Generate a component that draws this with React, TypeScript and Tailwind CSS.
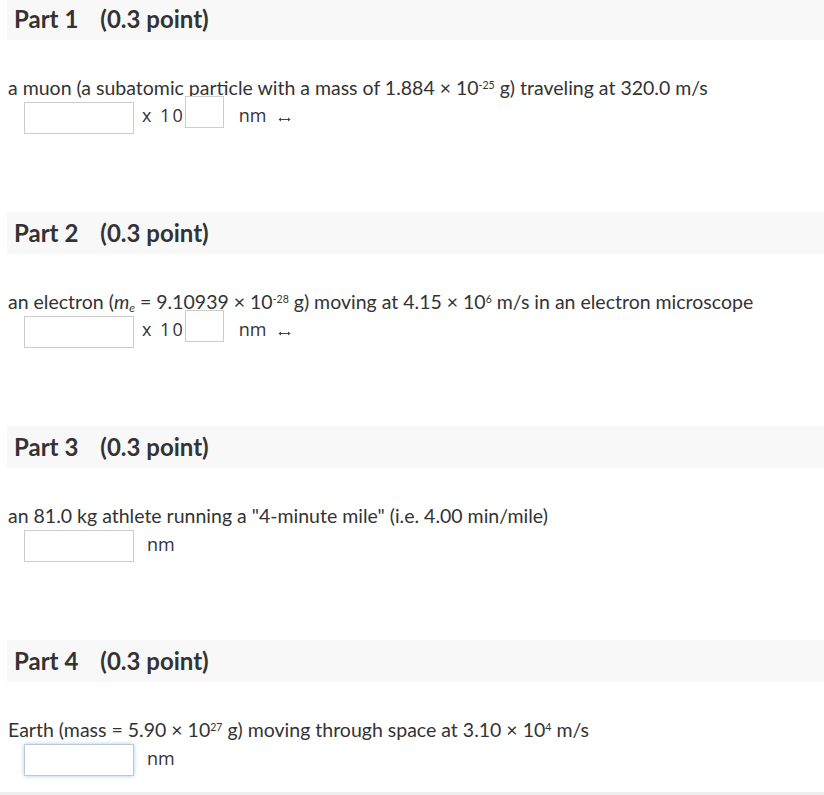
import type { ReactNode } from "react";

const sans = { fontFamily: "Lato, 'Open Sans', sans-serif" };

function Sup({ children }: { children: ReactNode }) {
  return <sup className="text-[10.5px] -top-[6px]">{children}</sup>;
}

function Box({ wide = true, focus = false }: { wide?: boolean; focus?: boolean }) {
  return (
    <div
      className={
        (wide ? "w-[110px] mt-[6px] " : "w-[39px] ") +
        "h-[32px] bg-white border " +
        (focus ? "border-[#bcc8d6] shadow-[0_0_4px_#a8cbee]" : "border-[#cccccc]")
      }
    />
  );
}

function Arrows() {
  return (
    <svg width="13" height="7" viewBox="0 0 13 7" className="ml-[12px] mt-[20px]">
      <path d="M1 3.5h11" stroke="#444" strokeWidth="1" />
      <path d="M0.5 3.5 3 1.5v4z M12.5 3.5 10 1.5v4z" fill="#444" />
    </svg>
  );
}

function Answer({ exp, focus }: { exp?: boolean; focus?: boolean }) {
  return (
    <div className="-mt-[2px] flex items-start pl-[24px] text-[18px] text-[#333] font-['Open_Sans',sans-serif]">
      <Box focus={focus} />
      {exp ? (
        <>
          <span className="ml-[8px] mt-[7px] leading-[24px] tracking-[2px]">x 10</span>
          <Box wide={false} />
          <span className="ml-[15px] mt-[7px] leading-[24px]">nm</span>
          <Arrows />
        </>
      ) : (
        <span className="ml-[13px] mt-[8px] leading-[24px]">nm</span>
      )}
    </div>
  );
}

function Part({ n, children }: { n: number; children: ReactNode }) {
  return (
    <section className="h-[214px]">
      <div className="ml-[7px] h-[42px] bg-[#f8f8f8] flex items-center pl-[7px] text-[24px] font-bold text-[#333]">
        <span>Part {n}</span>
        <span className="ml-[22px]">(0.3 point)</span>
      </div>
      <div className="pt-[38px]">{children}</div>
    </section>
  );
}

const q = "pl-[8px] text-[19.5px] leading-[20px] text-[#333]";

export default function App() {
  return (
    <div className="w-[824px] h-[795px] bg-white overflow-hidden relative" style={sans}>
      <div className="-mt-[2px]">
        <Part n={1}>
          <p className={q}>
            a muon (a subatomic particle with a mass of 1.884 × 10<Sup>-25</Sup> g) traveling at 320.0 m/s
          </p>
          <Answer exp />
        </Part>
        <Part n={2}>
          <p className={q}>
            an electron (<i>m</i>
            <sub className="text-[12px] italic">e</sub> = 9.10939 × 10<Sup>-28</Sup> g) moving at 4.15 × 10
            <Sup>6</Sup> m/s in an electron microscope
          </p>
          <Answer exp />
        </Part>
        <Part n={3}>
          <p className={q}>an 81.0 kg athlete running a "4-minute mile" (i.e. 4.00 min/mile)</p>
          <Answer />
        </Part>
        <Part n={4}>
          <p className={q}>
            Earth (mass = 5.90 × 10<Sup>27</Sup> g) moving through space at 3.10 × 10<Sup>4</Sup> m/s
          </p>
          <Answer focus />
        </Part>
      </div>
      <div className="absolute left-0 right-0 top-[792px] h-[3px] bg-[#eeeeee]" />
    </div>
  );
}
